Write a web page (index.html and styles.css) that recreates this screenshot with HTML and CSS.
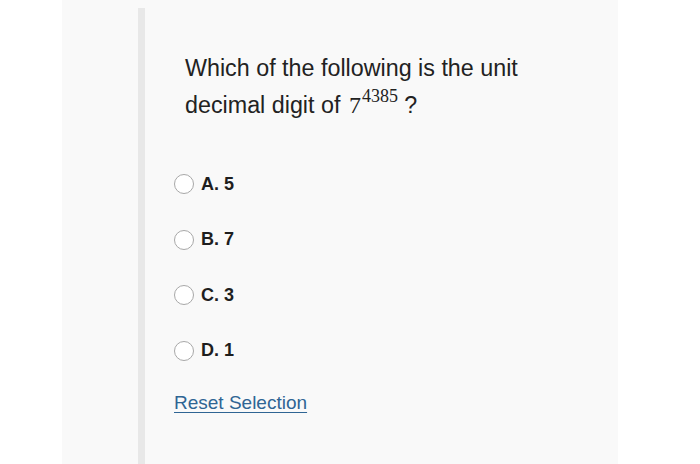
FILE: index.html
```html
<!DOCTYPE html>
<html>
<head>
<meta charset="utf-8">
<link rel="stylesheet" href="styles.css">
</head>
<body>
<div class="page">
  <div class="panel">
    <div class="card">
      <p class="question">Which of the following is the unit decimal digit of <span class="math"><span class="base">7</span><sup class="exp">4385</sup></span> ?</p>
      <ul class="options">
        <li class="option"><span class="radio"></span><span class="label">A. 5</span></li>
        <li class="option"><span class="radio"></span><span class="label">B. 7</span></li>
        <li class="option"><span class="radio"></span><span class="label">C. 3</span></li>
        <li class="option"><span class="radio"></span><span class="label">D. 1</span></li>
      </ul>
      <a class="reset" href="#">Reset Selection</a>
    </div>
  </div>
</div>
</body>
</html>
```

FILE: styles.css
```css
html, body {
  margin: 0;
  padding: 0;
  background: #ffffff;
}
body {
  font-family: "Liberation Sans", Arial, sans-serif;
  color: #222222;
}
.page {
  display: flex;
  height: 464px;
  overflow: hidden;
}
.panel {
  margin-left: 62px;
  width: 556px;
  background: #f9f9f9;
  padding-top: 8px;
  padding-left: 76px;
  box-sizing: border-box;
  display: flex;
}
.card {
  border-left: 7px solid #e8e8e8;
  padding-left: 29px;
  padding-top: 42px;
  flex: 1;
  display: flex;
  flex-direction: column;
  align-items: flex-start;
}
.question {
  margin: 0 0 0 11px;
  font-size: 23.3px;
  line-height: 37px;
  width: 350px;
}
.math {
  font-family: "Liberation Serif", "Times New Roman", serif;
  margin-left: 2px;
}
.base {
  font-size: 24px;
}
.exp {
  font-size: 18px;
  vertical-align: 11px;
  line-height: 18px;
  margin-left: 1px;
}
.options {
  list-style: none;
  margin: 50px 0 0 0;
  padding: 0;
  display: flex;
  flex-direction: column;
  gap: 35.6px;
}
.option {
  display: flex;
  align-items: center;
  height: 20px;
  gap: 7px;
}
.radio {
  width: 18px;
  height: 18px;
  border: 1px solid #a8a8a8;
  border-radius: 50%;
  background: #ffffff;
}
.label {
  font-weight: bold;
  font-size: 18px;
  color: #1e1e1e;
}
.reset {
  margin-top: 31px;
  font-size: 19px;
  line-height: 22px;
  color: #2f6594;
  text-decoration: underline;
  text-underline-offset: 3px;
}
```
